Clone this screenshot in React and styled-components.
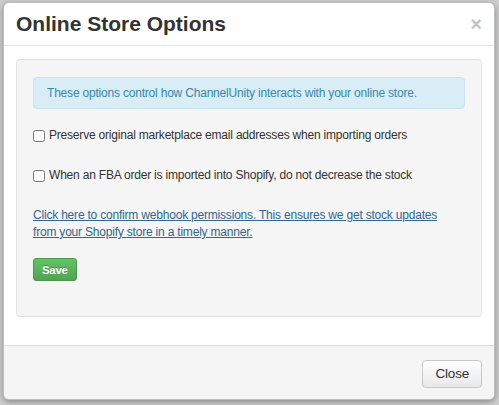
import React from 'react'
import styled, { createGlobalStyle } from 'styled-components'

const GlobalStyle = createGlobalStyle`
  html, body { margin: 0; padding: 0; }
  body {
    background: #cfcfcf;
    font-family: "Liberation Sans", Arial, sans-serif;
    width: 499px;
    height: 405px;
    overflow: hidden;
  }
`

const Page = styled.div`
  padding: 2px 4px 0 3px;
`

const Modal = styled.div`
  width: 492px;
  height: 398px;
  background: #fff;
  border: 1px solid rgba(0, 0, 0, 0.25);
  border-radius: 6px;
  box-shadow: 0 2px 6px rgba(0, 0, 0, 0.35);
  box-sizing: border-box;
  display: flex;
  flex-direction: column;
  overflow: hidden;
`

const Header = styled.div`
  height: 42px;
  padding: 0 12px;
  border-bottom: 1px solid #e5e5e5;
  display: flex;
  align-items: center;
  justify-content: space-between;
`

const Title = styled.h3`
  margin: 0;
  font-size: 21px;
  font-weight: bold;
  color: #333;
`

const CloseX = styled.span`
  font-size: 20px;
  font-weight: bold;
  color: #c4c4c4;
  line-height: 1;
`

const Body = styled.div`
  flex: 1;
  padding: 13px 12px 0;
`

const Well = styled.div`
  height: 258px;
  box-sizing: border-box;
  background: #f5f5f5;
  border: 1px solid #e3e3e3;
  border-radius: 4px;
  padding: 17px 16px;
`

const Text = styled.div`
  font-size: 12px;
  letter-spacing: -0.2px;
`

const Alert = styled(Text)`
  background: #d9edf7;
  border: 1px solid #c9e3f1;
  border-radius: 4px;
  color: #3a87ad;
  padding: 8px 13px;
`

const CheckRow = styled(Text).attrs({ as: 'label' })`
  display: flex;
  align-items: center;
  gap: 4px;
  color: #333;
  margin-top: ${p => p.$top}px;
  input { margin: 1px 0 0 0; width: 12px; height: 12px; }
`

const Link = styled(Text).attrs({ as: 'a' })`
  display: block;
  max-width: 410px;
  margin-top: 25px;
  line-height: 17px;
  color: #326790;
  text-decoration: underline;
`

const SaveButton = styled.button`
  margin-top: 17px;
  height: 23px;
  padding: 0 8px;
  font-family: inherit;
  font-size: 11.5px;
  font-weight: bold;
  letter-spacing: -0.3px;
  color: #fff;
  background: linear-gradient(#62c462, #51a351);
  border: 1px solid #4a9a4a;
  border-radius: 3px;
  text-shadow: 0 -1px 0 rgba(0, 0, 0, 0.25);
`

const Footer = styled.div`
  height: 53px;
  background: #f5f5f5;
  border-top: 1px solid #ddd;
  display: flex;
  align-items: center;
  justify-content: flex-end;
  padding: 0 12px;
`

const CloseButton = styled.button`
  height: 28px;
  margin-top: 2px;
  padding: 0 12px;
  font-family: inherit;
  font-size: 13.5px;
  letter-spacing: -0.2px;
  color: #333;
  background: linear-gradient(#fff, #e8e8e8);
  border: 1px solid #c8c8c8;
  border-radius: 4px;
`

export default function App() {
  return (
    <Page>
      <GlobalStyle />
      <Modal>
        <Header>
          <Title>Online Store Options</Title>
          <CloseX>×</CloseX>
        </Header>
        <Body>
          <Well>
            <Alert>These options control how ChannelUnity interacts with your online store.</Alert>
            <CheckRow $top={19}>
              <input type="checkbox" />
              Preserve original marketplace email addresses when importing orders
            </CheckRow>
            <CheckRow $top={26}>
              <input type="checkbox" />
              When an FBA order is imported into Shopify, do not decrease the stock
            </CheckRow>
            <Link href="#">
              Click here to confirm webhook permissions. This ensures we get stock updates from your Shopify store in a timely manner.
            </Link>
            <SaveButton>Save</SaveButton>
          </Well>
        </Body>
        <Footer>
          <CloseButton>Close</CloseButton>
        </Footer>
      </Modal>
    </Page>
  )
}
